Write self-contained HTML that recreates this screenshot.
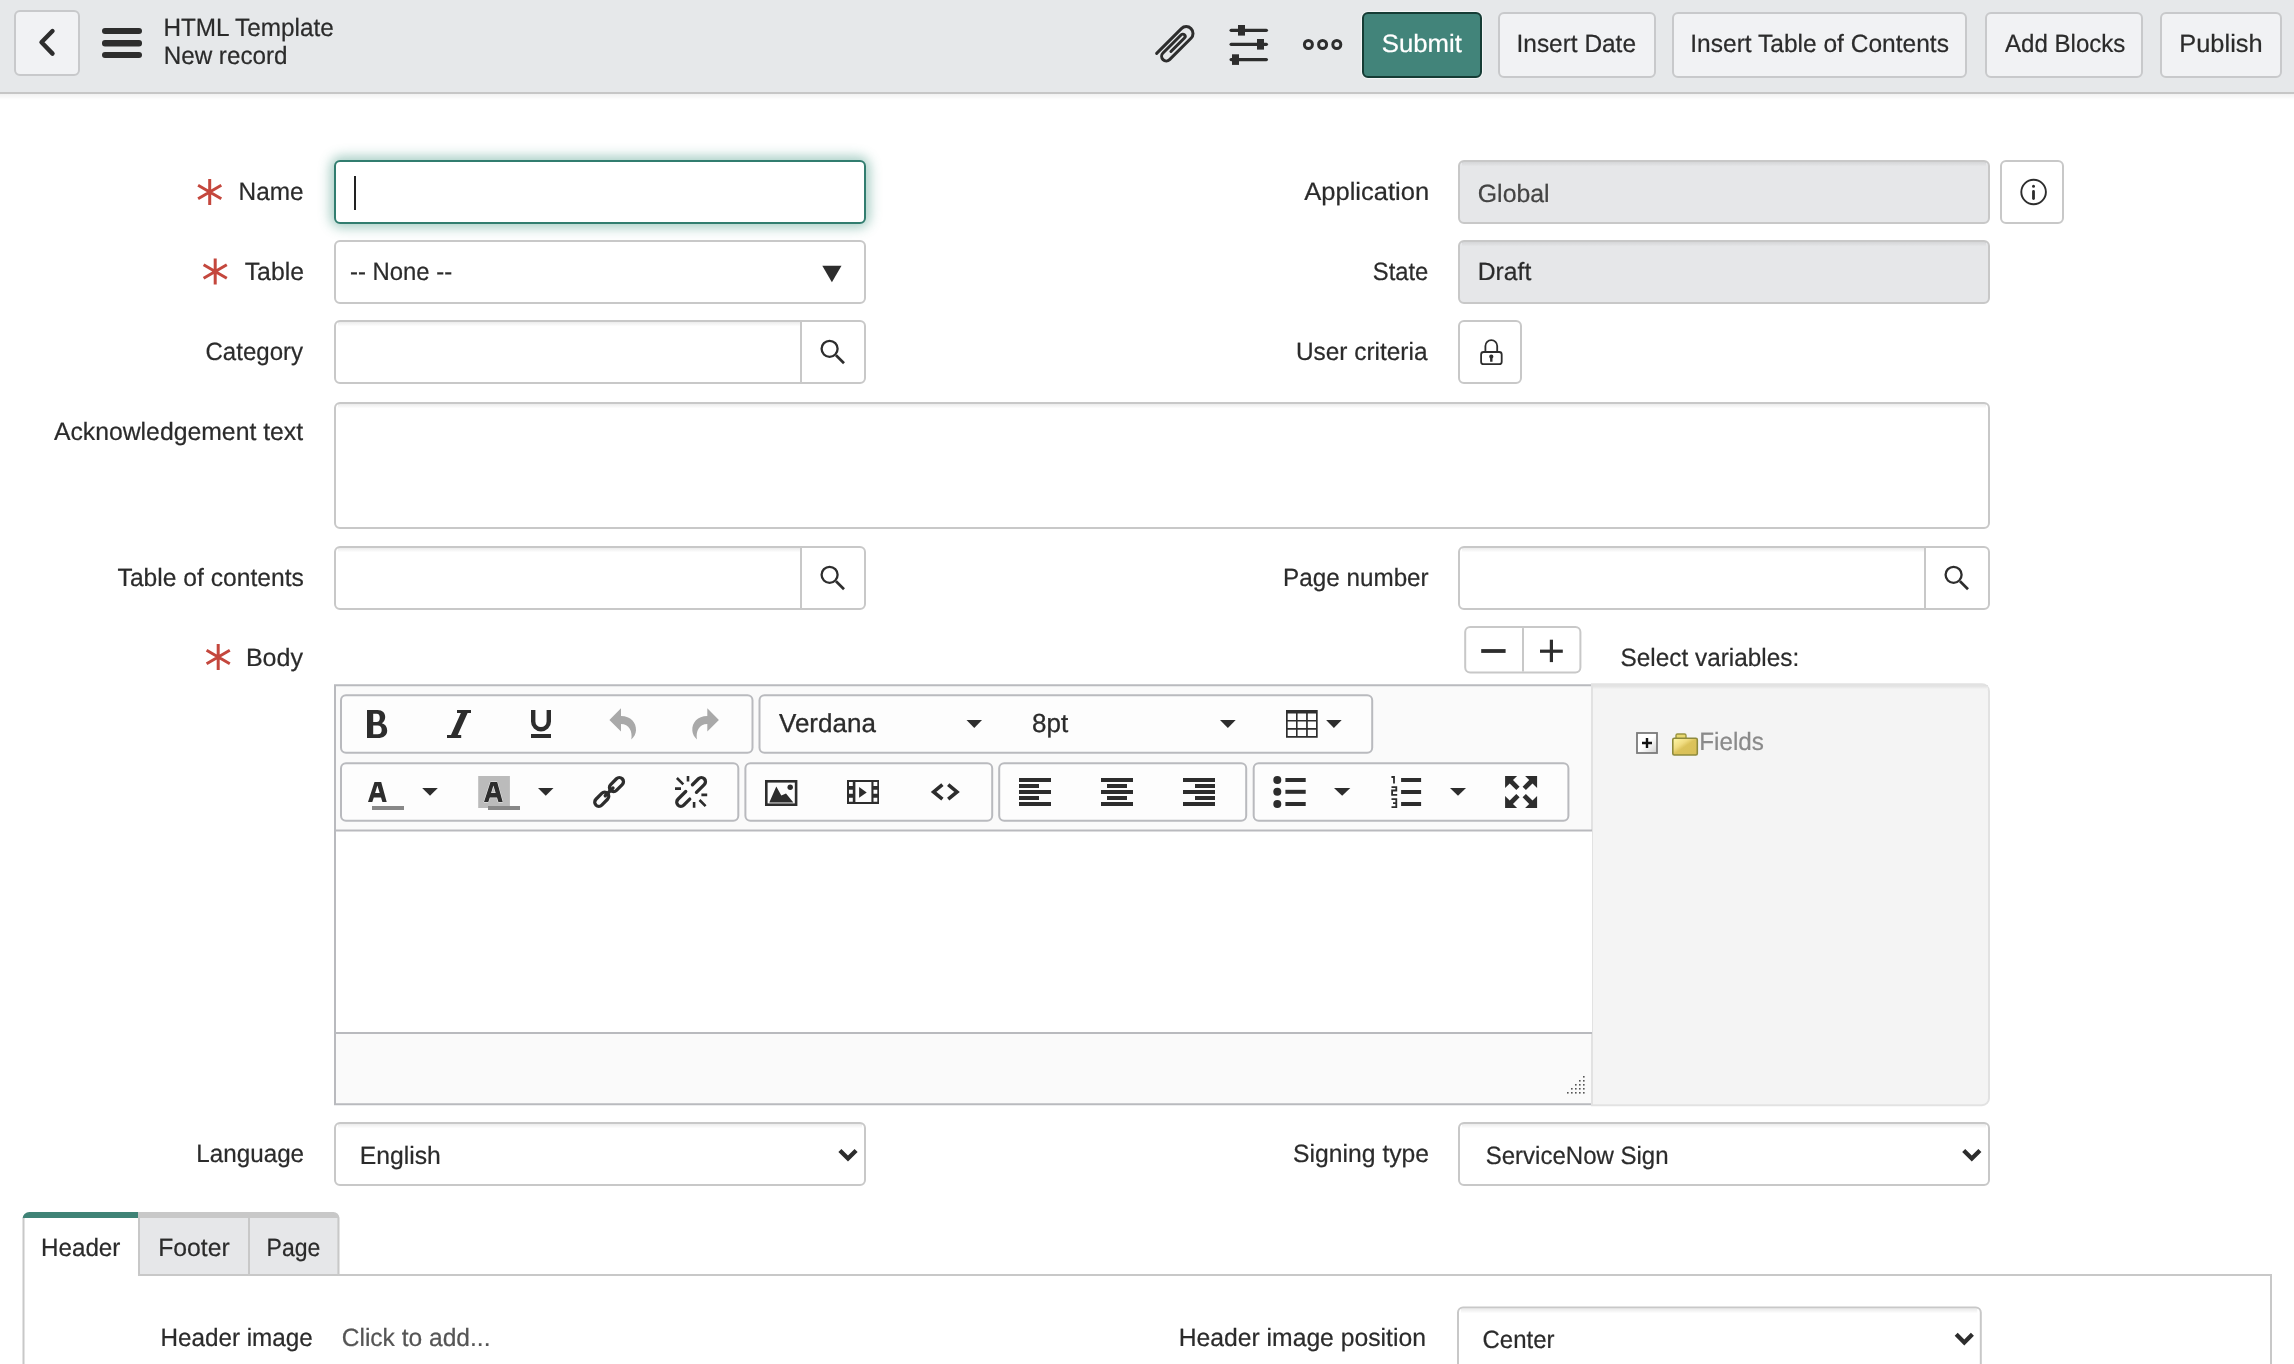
<!DOCTYPE html>
<html><head><meta charset="utf-8">
<style>
html,body{margin:0;padding:0;background:#fff;width:2294px;height:1364px;overflow:hidden}
body{position:relative;font-family:"Liberation Sans",sans-serif}
svg{position:absolute;left:0;top:0;will-change:transform}

.glow{position:absolute;left:334px;top:160px;width:532px;height:64px;box-sizing:border-box;border-radius:8px;box-shadow:0 0 12px 4px rgba(50,140,120,0.42)}
.hshadow{position:absolute;left:0;top:94px;width:2294px;height:6px;background:linear-gradient(rgba(0,0,0,0.055),rgba(0,0,0,0))}
</style></head>
<body>
<div class="hshadow"></div>
<div class="glow"></div>
<svg width="2294" height="1364" viewBox="0 0 2294 1364" font-family="Liberation Sans, sans-serif" font-size="25" style="text-rendering:geometricPrecision">
<!-- HEADER -->
<rect x="0" y="0" width="2294" height="92" fill="#e6e8ea"/>
<rect x="0" y="92" width="2294" height="2" fill="#c6c6c6"/>
<rect x="15" y="11" width="64" height="64" rx="5" fill="#f1f2f4" stroke="#c8c9cb" stroke-width="2"/>
<polyline points="52.5,31 41.5,42.3 52.5,53.6" fill="none" stroke="#2d2d2d" stroke-width="4.4" stroke-linecap="round" stroke-linejoin="round"/>
<rect x="102" y="28" width="40" height="6" rx="3" fill="#2d2d2d"/>
<rect x="102" y="40" width="40" height="6.4" rx="3" fill="#2d2d2d"/>
<rect x="102" y="52" width="40" height="6" rx="3" fill="#2d2d2d"/>
<text stroke="#2b2b2b" stroke-width="0.22" x="163.4" y="36" fill="#2b2b2b" textLength="170.3" lengthAdjust="spacingAndGlyphs">HTML Template</text>
<text stroke="#2b2b2b" stroke-width="0.22" x="163.7" y="64" fill="#2b2b2b" textLength="123.8" lengthAdjust="spacingAndGlyphs">New record</text>
<!-- paperclip -->
<g transform="translate(1186.2,33.4) rotate(-45)" fill="none" stroke="#2d2d2d" stroke-width="3" stroke-linecap="round">
<path d="M-35,-6.8 L0,-6.8 A6.8,6.8 0 0 1 0,6.8 L-30.3,6.8 A4.65,4.65 0 0 1 -30.3,-2.5 L-4.5,-2.5 A2.25,2.25 0 0 1 -4.5,2 L-23.6,2"/>
</g>
<!-- sliders -->
<g fill="#2d2d2d">
<rect x="1229.5" y="28.7" width="38.5" height="3.2" rx="1.6"/>
<rect x="1229.5" y="42.7" width="38.5" height="3.2" rx="1.6"/>
<rect x="1229.5" y="58" width="38.5" height="3.2" rx="1.6"/>
<rect x="1238" y="25" width="7" height="10.6"/>
<rect x="1257" y="39" width="7" height="10.6"/>
<rect x="1232" y="54.3" width="7" height="10.6"/>
</g>
<!-- dots -->
<g fill="none" stroke="#2d2d2d" stroke-width="3">
<circle cx="1308.4" cy="44.5" r="4"/>
<circle cx="1322.6" cy="44.5" r="4"/>
<circle cx="1336.8" cy="44.5" r="4"/>
</g>
<!-- buttons -->
<rect x="1361.5" y="11.5" width="121" height="67" rx="6.5" fill="none" stroke="#f4f5f6" stroke-width="1"/>
<rect x="1363" y="13" width="118" height="64" rx="5" fill="#42847a" stroke="#163c35" stroke-width="2"/>
<text stroke="#fff" stroke-width="0.22" x="1381.8" y="52" fill="#fff" textLength="80.1" lengthAdjust="spacingAndGlyphs">Submit</text>
<rect x="1499" y="13" width="156" height="64" rx="5" fill="#f1f2f4" stroke="#c8c9cb" stroke-width="2"/>
<text stroke="#2b2b2b" stroke-width="0.22" x="1516.5" y="52" fill="#2b2b2b" textLength="119.5" lengthAdjust="spacingAndGlyphs">Insert Date</text>
<rect x="1673" y="13" width="293" height="64" rx="5" fill="#f1f2f4" stroke="#c8c9cb" stroke-width="2"/>
<text stroke="#2b2b2b" stroke-width="0.22" x="1690.3" y="52" fill="#2b2b2b" textLength="258.6" lengthAdjust="spacingAndGlyphs">Insert Table of Contents</text>
<rect x="1986" y="13" width="156" height="64" rx="5" fill="#f1f2f4" stroke="#c8c9cb" stroke-width="2"/>
<text stroke="#2b2b2b" stroke-width="0.22" x="2005.0" y="52" fill="#2b2b2b" textLength="120.4" lengthAdjust="spacingAndGlyphs">Add Blocks</text>
<rect x="2161" y="13" width="120" height="64" rx="5" fill="#f1f2f4" stroke="#c8c9cb" stroke-width="2"/>
<text stroke="#2b2b2b" stroke-width="0.22" x="2179.3" y="52" fill="#2b2b2b" textLength="83.3" lengthAdjust="spacingAndGlyphs">Publish</text>

<!-- FORM -->
<g fill="#2b2b2b">
<!-- asterisks -->
<g stroke="#c4473d" stroke-width="3" fill="none">
<path d="M209.7,179 V205 M198.1,185.3 L221.3,198.7 M198.1,198.7 L221.3,185.3"/>
<path d="M215.2,258.5 V284.5 M203.6,264.8 L226.8,278.2 M203.6,278.2 L226.8,264.8"/>
<path d="M218.2,644 V670 M206.6,650.3 L229.8,663.7 M206.6,663.7 L229.8,650.3"/>
</g>
<text stroke="#2b2b2b" stroke-width="0.22" x="238.6" y="200" textLength="65.0" lengthAdjust="spacingAndGlyphs">Name</text>
<text stroke="#2b2b2b" stroke-width="0.22" x="244.7" y="280" textLength="59.3" lengthAdjust="spacingAndGlyphs">Table</text>
<text stroke="#2b2b2b" stroke-width="0.22" x="205.5" y="360" textLength="97.6" lengthAdjust="spacingAndGlyphs">Category</text>
<text stroke="#2b2b2b" stroke-width="0.22" x="53.9" y="440" textLength="249.2" lengthAdjust="spacingAndGlyphs">Acknowledgement text</text>
<text stroke="#2b2b2b" stroke-width="0.22" x="117.6" y="586" textLength="186.3" lengthAdjust="spacingAndGlyphs">Table of contents</text>
<text stroke="#2b2b2b" stroke-width="0.22" x="245.9" y="666" textLength="57.1" lengthAdjust="spacingAndGlyphs">Body</text>
<text stroke="#2b2b2b" stroke-width="0.22" x="196.3" y="1162" textLength="107.8" lengthAdjust="spacingAndGlyphs">Language</text>
<text stroke="#2b2b2b" stroke-width="0.22" x="1304.2" y="200" textLength="125.0" lengthAdjust="spacingAndGlyphs">Application</text>
<text stroke="#2b2b2b" stroke-width="0.22" x="1372.8" y="280" textLength="55.5" lengthAdjust="spacingAndGlyphs">State</text>
<text stroke="#2b2b2b" stroke-width="0.22" x="1295.9" y="360" textLength="131.6" lengthAdjust="spacingAndGlyphs">User criteria</text>
<text stroke="#2b2b2b" stroke-width="0.22" x="1283.1" y="586" textLength="145.6" lengthAdjust="spacingAndGlyphs">Page number</text>
<text stroke="#2b2b2b" stroke-width="0.22" x="1293.1" y="1162" textLength="136.0" lengthAdjust="spacingAndGlyphs">Signing type</text>
<text stroke="#2b2b2b" stroke-width="0.22" x="1620.6" y="666" textLength="178.6" lengthAdjust="spacingAndGlyphs">Select variables:</text>
</g>
<!-- Name input -->
<rect x="335" y="161" width="530" height="62" rx="5" fill="#fff" stroke="#317d6f" stroke-width="2"/>
<rect x="354" y="176" width="2" height="34" fill="#222"/>
<!-- Table select -->
<rect x="335" y="241" width="530" height="62" rx="5" fill="#fff" stroke="#c8c8c8" stroke-width="2"/>
<text stroke="#2b2b2b" stroke-width="0.22" x="350.0" y="280" fill="#2b2b2b" textLength="102.2" lengthAdjust="spacingAndGlyphs">-- None --</text>
<path d="M822.3,265.8 H841.5 L831.9,282.3 Z" fill="#2d2d2d"/>
<!-- Category -->
<rect x="335" y="321" width="530" height="62" rx="5" fill="#fff" stroke="#c8c8c8" stroke-width="2"/>
<rect x="800" y="322" width="2" height="60" fill="#c8c8c8"/>
<g fill="none" stroke="#2d2d2d" stroke-width="2.3"><circle cx="829.6" cy="348.8" r="8"/><path d="M836.0,355.2 L844.0,363.2" stroke-width="2.7"/></g>
<!-- Ack text -->
<rect x="335" y="403" width="1654" height="125" rx="5" fill="#fff" stroke="#c8c8c8" stroke-width="2"/>
<!-- TOC -->
<rect x="335" y="547" width="530" height="62" rx="5" fill="#fff" stroke="#c8c8c8" stroke-width="2"/>
<rect x="800" y="548" width="2" height="60" fill="#c8c8c8"/>
<g fill="none" stroke="#2d2d2d" stroke-width="2.3"><circle cx="829.6" cy="574.8" r="8"/><path d="M836.0,581.2 L844.0,589.2" stroke-width="2.7"/></g>
<!-- Application -->
<rect x="1459" y="161" width="530" height="62" rx="5" fill="#e6e7e9" stroke="#c8c8c8" stroke-width="2"/>
<text stroke="#444" stroke-width="0.22" x="1477.8" y="202" fill="#444" textLength="71.8" lengthAdjust="spacingAndGlyphs">Global</text>
<rect x="2001" y="161" width="62" height="62" rx="5" fill="#fff" stroke="#c8c8c8" stroke-width="2"/>
<g fill="none" stroke="#2d2d2d" stroke-width="1.9"><circle cx="2033.6" cy="192" r="12.3"/></g>
<circle cx="2033.5" cy="186.2" r="1.5" fill="#2d2d2d"/>
<rect x="2032.1" y="190" width="2.8" height="10" rx="1.4" fill="#2d2d2d"/>
<!-- State -->
<rect x="1459" y="241" width="530" height="62" rx="5" fill="#e6e7e9" stroke="#c8c8c8" stroke-width="2"/>
<text stroke="#2b2b2b" stroke-width="0.22" x="1477.8" y="280" fill="#2b2b2b" textLength="53.5" lengthAdjust="spacingAndGlyphs">Draft</text>
<!-- User criteria -->
<rect x="1459" y="321" width="62" height="62" rx="5" fill="#fff" stroke="#c8c8c8" stroke-width="2"/>
<g fill="none" stroke="#2d2d2d" stroke-width="1.8">
<path d="M1485.4,352 V346.1 A5.9,5.9 0 0 1 1497.2,346.1 V352"/>
<rect x="1481.1" y="352" width="20.6" height="12.2" rx="2.5"/>
</g>
<path d="M1491.3,354.5 a2.1,2.1 0 0 1 2.1,2.1 c0,0.8 -0.4,1.4 -0.9,1.8 v3.4 h-2.4 v-3.4 c-0.5,-0.4 -0.9,-1 -0.9,-1.8 a2.1,2.1 0 0 1 2.1,-2.1z" fill="#2d2d2d"/>
<!-- Page number -->
<rect x="1459" y="547" width="530" height="62" rx="5" fill="#fff" stroke="#c8c8c8" stroke-width="2"/>
<rect x="1924" y="548" width="2" height="60" fill="#c8c8c8"/>
<g fill="none" stroke="#2d2d2d" stroke-width="2.3"><circle cx="1953.6" cy="574.8" r="8"/><path d="M1960.0,581.2 L1968.0,589.2" stroke-width="2.7"/></g>
<!-- +/- -->
<rect x="1465.2" y="627.1" width="115.2" height="45.4" rx="5" fill="#fff" stroke="#c8c8c8" stroke-width="2"/>
<rect x="1522" y="628.1" width="2" height="43.4" fill="#c8c8c8"/>
<rect x="1481.2" y="649.1" width="24.4" height="3.8" fill="#2d2d2d"/>
<rect x="1540" y="649.6" width="22.8" height="3.2" fill="#2d2d2d"/>
<rect x="1549.8" y="639.7" width="3.2" height="22.4" fill="#2d2d2d"/>
<!-- EDITOR -->
<rect x="335" y="685.2" width="1257" height="419" fill="#fafafa"/>
<path d="M1592,685.2 H335 V1104.2 H1592" fill="none" stroke="#b9babe" stroke-width="2"/>
<defs><linearGradient id="vtop" x1="0" y1="0" x2="0" y2="1"><stop offset="0" stop-color="#dedede"/><stop offset="1" stop-color="#f4f4f4"/></linearGradient></defs>
<path d="M1592,684.2 H1982 A7,7 0 0 1 1989,691.2 V1098.2 A7,7 0 0 1 1982,1105.2 H1592 Z" fill="#f4f4f4" stroke="#e2e2e2" stroke-width="2"/>
<rect x="1593" y="685.2" width="395" height="4" fill="url(#vtop)"/>
<rect x="336" y="831" width="1256" height="202" fill="#fff"/>
<rect x="336" y="829.5" width="1256" height="2" fill="#b9babe"/>
<rect x="336" y="1032" width="1256" height="2" fill="#b9babe"/>
<!-- toolbar groups -->
<g fill="#fdfdfd" stroke="#b9babe" stroke-width="2">
<rect x="341" y="695.2" width="411.5" height="57.5" rx="5"/>
<rect x="759.5" y="695.2" width="612.7" height="57.5" rx="5"/>
<rect x="341" y="763.2" width="397.3" height="57.5" rx="5"/>
<rect x="745.4" y="763.2" width="246.8" height="57.5" rx="5"/>
<rect x="999.2" y="763.2" width="247" height="57.5" rx="5"/>
<rect x="1253.7" y="763.2" width="314.7" height="57.5" rx="5"/>
</g>
<g fill="#2d2d2d">
<!-- B -->
<path fill-rule="evenodd" d="M367,710 H377.5 C382.6,710 385.2,713 385.2,717 C385.2,720 383.8,722.2 381.8,723.3 C385.2,724.2 387.2,726.9 387.2,730.4 C387.2,735.2 383.7,738 377.5,738 H367 Z M373.2,713.8 V722 H376.6 C378.8,722 379.8,720.2 379.8,717.9 C379.8,715.4 378.8,713.8 376.6,713.8 Z M373.2,725.6 V734.2 H377.6 C380.4,734.2 381.7,732.5 381.7,729.9 C381.7,727.3 380.4,725.6 377.6,725.6 Z"/>
<!-- I -->
<path d="M457,710 H471 V713 H467.6 L457.7,735 H461.2 V738 H447 V735 H451 L460.9,713 H457 Z"/>
<!-- U -->
<path d="M531,710 H535.4 V721.5 A5.6,5.6 0 0 0 546.6,721.5 V710 H551 V721.5 A10,10 0 0 1 531,721.5 Z"/>
<rect x="531" y="734" width="20" height="4"/>
</g>
<!-- undo redo -->
<g fill="#a9a9a9">
<path d="M609.4,719.9 L621,708.3 V716 C630.8,716 636.3,722.5 636,730.5 C635.8,734 634,737 631.3,739.5 C632.8,731.5 629,724 621,724 V731.6 Z"/>
<path d="M718.9,719.9 L707.3,708.3 V716 C697.5,716 692,722.5 692.3,730.5 C692.5,734 694.3,737 697,739.5 C695.5,731.5 699.3,724 707.3,724 V731.6 Z"/>
</g>
<!-- font family / size -->
<text x="779" y="732" font-size="26" fill="#2b2b2b" stroke="#2b2b2b" stroke-width="0.3">Verdana</text>
<text x="1032" y="732" font-size="26" fill="#2b2b2b" stroke="#2b2b2b" stroke-width="0.3">8pt</text>
<g fill="#2d2d2d">
<path d="M966.5,720 H982 L974.25,727.9 Z"/>
<path d="M1220,720 H1235.7 L1227.85,727.9 Z"/>
<path d="M1326.1,720 H1341.7 L1333.9,727.9 Z"/>
<!-- table icon -->
<path fill-rule="evenodd" d="M1286,710.1 H1317.7 V737.8 H1286 Z M1287.7,713.6 V720 H1296 V713.6 Z M1297.6,713.6 V720 H1306.1 V713.6 Z M1307.8,713.6 V720 H1316 V713.6 Z M1287.7,721.6 V728 H1296 V721.6 Z M1297.6,721.6 V728 H1306.1 V721.6 Z M1307.8,721.6 V728 H1316 V721.6 Z M1287.7,729.7 V736.1 H1296 V729.7 Z M1297.6,729.7 V736.1 H1306.1 V729.7 Z M1307.8,729.7 V736.1 H1316 V729.7 Z"/>
</g>
<!-- row 2 -->
<g fill="#2d2d2d">
<!-- forecolor A -->
<path fill-rule="evenodd" d="M368,802 L374.5,782 H381.2 L386.7,802 H382.4 L381,797.6 H373.8 L372.3,802 Z M375.1,793 H379.7 L377.4,785.6 Z"/>
<path d="M422.2,788 H437.8 L430,795.8 Z"/>
<path d="M538,788 H553.5 L545.75,795.8 Z"/>
</g>
<rect x="372" y="806" width="32" height="4" fill="#888"/>
<rect x="478.2" y="776" width="31.7" height="32" fill="#bbb"/>
<path fill-rule="evenodd" d="M484,802 L490.5,782 H497.2 L502.7,802 H498.4 L497,797.6 H489.8 L488.3,802 Z M491.1,793 H495.7 L493.4,785.6 Z" fill="#2d2d2d" stroke="#fff" stroke-width="0.8" paint-order="stroke"/>
<rect x="488" y="806" width="32" height="4" fill="#888"/>
<!-- link -->
<g fill="none" stroke="#2d2d2d" stroke-width="3.3" stroke-linecap="round">
<g transform="translate(609.1,791.9) rotate(-45)">
<rect x="-18.6" y="-4.1" width="16.4" height="8.2" rx="4.1"/>
<rect x="2.2" y="-4.1" width="16.4" height="8.2" rx="4.1"/>
<path d="M-5.5,0 H5.5"/>
</g>
</g>
<!-- unlink -->
<g fill="none" stroke="#2d2d2d" stroke-width="3.3">
<g transform="translate(691.1,791.9) rotate(-45)" stroke-linecap="round">
<path d="M-3.5,-4.1 H-14.5 A4.1,4.1 0 0 0 -14.5,4.1 H-6"/>
<path d="M3.5,4.1 H14.5 A4.1,4.1 0 0 0 14.5,-4.1 H6"/>
</g>
<path d="M688,776 V781.5 M676.9,778 L683.3,784.4 M675,788.6 H681 M701.4,794.9 H707.2 M694.1,802 V807.8 M699.5,800 L705.6,806.2" stroke-width="2.6"/>
</g>
<!-- image -->
<rect x="766.3" y="781.3" width="29.8" height="23.4" fill="none" stroke="#2d2d2d" stroke-width="2.6"/>
<path d="M769.3,802.6 L776.3,786.6 L781.3,795.6 L786,793.4 L793.4,802.6 Z" fill="#2d2d2d"/>
<circle cx="790.2" cy="787.2" r="2.7" fill="#2d2d2d"/>
<!-- media -->
<path fill-rule="evenodd" fill="#2d2d2d" d="M847,780 H879 V804 H847 Z M855.4,782 V801.9 H871.4 V782 Z M849,782.1 V785.9 H852.8 V782.1 Z M849,789.8 V793.8 H852.8 V789.8 Z M849,797.8 V801.7 H852.8 V797.8 Z M873.5,782.1 V785.9 H877.3 V782.1 Z M873.5,789.8 V793.8 H877.3 V789.8 Z M873.5,797.8 V801.7 H877.3 V797.8 Z"/>
<path d="M859.1,787 L866.7,792.4 L859.1,797.8 Z" fill="#2d2d2d"/>
<!-- code -->
<path d="M942.4,784.6 L933.6,791.9 L942.4,799.2 M948.2,784.6 L957,791.9 L948.2,799.2" fill="none" stroke="#2d2d2d" stroke-width="3.6"/>
<!-- align -->
<g fill="#2d2d2d">
<rect x="1019" y="778" width="32" height="4"/><rect x="1019" y="784" width="20" height="4"/><rect x="1019" y="790" width="32" height="4"/><rect x="1019" y="796" width="20" height="4"/><rect x="1019" y="802" width="32" height="4"/>
<rect x="1101" y="778" width="32" height="4"/><rect x="1107" y="784" width="20" height="4"/><rect x="1101" y="790" width="32" height="4"/><rect x="1107" y="796" width="20" height="4"/><rect x="1101" y="802" width="32" height="4"/>
<rect x="1183" y="778" width="32" height="4"/><rect x="1195" y="784" width="20" height="4"/><rect x="1183" y="790" width="32" height="4"/><rect x="1195" y="796" width="20" height="4"/><rect x="1183" y="802" width="32" height="4"/>
<!-- bullet list -->
<circle cx="1277.3" cy="780" r="4"/><circle cx="1277.3" cy="791.8" r="4"/><circle cx="1277.3" cy="804" r="4"/>
<rect x="1285.4" y="778" width="20.3" height="4"/><rect x="1285.4" y="789.8" width="20.3" height="4"/><rect x="1285.4" y="802" width="20.3" height="4"/>
<path d="M1334,788 H1350.3 L1342.15,795.8 Z"/>
<!-- numbered list -->
<rect x="1401.1" y="778" width="20" height="4"/><rect x="1401.1" y="790" width="20" height="4"/><rect x="1401.1" y="802" width="20" height="4"/>
<path d="M1450,788 H1466 L1458,795.8 Z"/>
</g>
<g fill="none" stroke="#2d2d2d" stroke-width="1.8">
<path d="M1391.4,777 H1394 V783.5"/>
<path d="M1391.5,787.2 H1396.3 V790.5 H1392.1 V794.9 H1397.2"/>
<path d="M1391.5,799.2 H1396.3 V807.1 H1391.5 M1393,803.1 H1396.3"/>
</g>
<!-- fullscreen -->
<g fill="#2d2d2d">
<path d="M1505.1,776 H1517.1 L1513,780.1 L1519.6,786.7 L1516.3,790 L1509.7,783.4 L1505.1,788 Z"/>
<path d="M1537.1,776 H1525.1 L1529.2,780.1 L1522.6,786.7 L1525.9,790 L1532.5,783.4 L1537.1,788 Z"/>
<path d="M1505.1,808 H1517.1 L1513,803.9 L1519.6,797.3 L1516.3,794 L1509.7,800.6 L1505.1,796 Z"/>
<path d="M1537.1,808 H1525.1 L1529.2,803.9 L1522.6,797.3 L1525.9,794 L1532.5,800.6 L1537.1,796 Z"/>
</g>
<!-- resize handle dots -->
<g fill="#555">
<rect x="1583" y="1076" width="1.6" height="1.6"/>
<rect x="1583" y="1080" width="1.6" height="1.6"/><rect x="1579" y="1080" width="1.6" height="1.6"/>
<rect x="1583" y="1084" width="1.6" height="1.6"/><rect x="1579" y="1084" width="1.6" height="1.6"/><rect x="1575" y="1084" width="1.6" height="1.6"/>
<rect x="1583" y="1088" width="1.6" height="1.6"/><rect x="1579" y="1088" width="1.6" height="1.6"/><rect x="1575" y="1088" width="1.6" height="1.6"/><rect x="1571" y="1088" width="1.6" height="1.6"/>
<rect x="1583" y="1092" width="1.6" height="1.6"/><rect x="1579" y="1092" width="1.6" height="1.6"/><rect x="1575" y="1092" width="1.6" height="1.6"/><rect x="1571" y="1092" width="1.6" height="1.6"/><rect x="1567" y="1092" width="1.6" height="1.6"/>
</g>
<!-- variables tree -->
<defs>
<linearGradient id="pb" x1="0" y1="0" x2="1" y2="1"><stop offset="0.5" stop-color="#fff"/><stop offset="1" stop-color="#cfcfcf"/></linearGradient>
<linearGradient id="fd" x1="0" y1="0" x2="1" y2="1"><stop offset="0" stop-color="#fff9a8"/><stop offset="0.35" stop-color="#f0dc80"/><stop offset="0.5" stop-color="#dcc35a"/><stop offset="1" stop-color="#d8bf58"/></linearGradient>
</defs>
<rect x="1637" y="733" width="20" height="20" fill="url(#pb)" stroke="#7a7a7a" stroke-width="1.8"/>
<path d="M1642,743 H1652 M1647,738 V748" stroke="#111" stroke-width="2.4"/>
<path d="M1676,738 V735.5 Q1676,734 1677.5,734 H1684.5 Q1686,734 1686,735.5 V738" fill="#e8d870" stroke="#9a9440" stroke-width="1.4"/>
<rect x="1672.8" y="738.2" width="24.5" height="16.8" rx="1.5" fill="url(#fd)" stroke="#8e8a3c" stroke-width="1.6"/>
<text stroke="#8a8a8a" stroke-width="0.22" x="1699.2" y="750" fill="#8a8a8a" textLength="64.7" lengthAdjust="spacingAndGlyphs">Fields</text>
<!-- Language / Signing selects -->
<rect x="335" y="1123" width="530" height="62" rx="5" fill="#fff" stroke="#c8c8c8" stroke-width="2"/>
<text stroke="#2b2b2b" stroke-width="0.22" x="359.8" y="1164" fill="#2b2b2b" textLength="81.0" lengthAdjust="spacingAndGlyphs">English</text>
<path d="M839.9,1150.4 L848,1158.5 L856.1,1150.4" fill="none" stroke="#2d2d2d" stroke-width="4.3"/>
<rect x="1459" y="1123" width="530" height="62" rx="5" fill="#fff" stroke="#c8c8c8" stroke-width="2"/>
<text stroke="#2b2b2b" stroke-width="0.22" x="1485.7" y="1164" fill="#2b2b2b" textLength="182.9" lengthAdjust="spacingAndGlyphs">ServiceNow Sign</text>
<path d="M1963.7,1150.4 L1971.8,1158.5 L1979.9,1150.4" fill="none" stroke="#2d2d2d" stroke-width="4.3"/>
<!-- TABS -->
<path d="M23.5,1364 V1220 A6,6 0 0 1 29.5,1213.5" fill="none" stroke="#c8c8c8" stroke-width="2"/>
<rect x="138" y="1217" width="201.4" height="58" fill="#e6e7e9"/>
<path d="M22.5,1219 A7,7 0 0 1 29.5,1212 H138 V1218 H22.5 Z" fill="#3f8376"/>
<path d="M138,1212 H333.4 A6,6 0 0 1 339.4,1218 V1275 H337.4 V1218 H138 Z" fill="#c8c8c8"/>
<rect x="138" y="1217" width="2" height="58" fill="#c8c8c8"/>
<rect x="248" y="1217" width="2" height="58" fill="#c8c8c8"/>
<path d="M138,1275 H2271 V1364" fill="none" stroke="#c8c8c8" stroke-width="2"/>
<text stroke="#2b2b2b" stroke-width="0.22" x="41.0" y="1256" fill="#2b2b2b" textLength="79.4" lengthAdjust="spacingAndGlyphs">Header</text>
<text stroke="#2b2b2b" stroke-width="0.22" x="158.2" y="1256" fill="#2b2b2b" textLength="71.5" lengthAdjust="spacingAndGlyphs">Footer</text>
<text stroke="#2b2b2b" stroke-width="0.22" x="266.6" y="1256" fill="#2b2b2b" textLength="53.7" lengthAdjust="spacingAndGlyphs">Page</text>
<text stroke="#2b2b2b" stroke-width="0.22" x="160.4" y="1346" fill="#2b2b2b" textLength="152.4" lengthAdjust="spacingAndGlyphs">Header image</text>
<text stroke="#555" stroke-width="0.22" x="341.7" y="1346" fill="#555" textLength="148.8" lengthAdjust="spacingAndGlyphs">Click to add...</text>
<text stroke="#2b2b2b" stroke-width="0.22" x="1178.7" y="1346" fill="#2b2b2b" textLength="247.2" lengthAdjust="spacingAndGlyphs">Header image position</text>
<rect x="1458" y="1307.4" width="522.8" height="70" rx="5" fill="#fff" stroke="#c8c8c8" stroke-width="2"/>
<text stroke="#2b2b2b" stroke-width="0.22" x="1482.5" y="1348" fill="#2b2b2b" textLength="72.0" lengthAdjust="spacingAndGlyphs">Center</text>
<path d="M1956.2,1334.3 L1964.3,1342.4 L1972.4,1334.3" fill="none" stroke="#2d2d2d" stroke-width="4.3"/>

<!-- insets -->
<defs><linearGradient id="insw" x1="0" y1="0" x2="0" y2="1"><stop offset="0" stop-color="#000" stop-opacity="0.075"/><stop offset="1" stop-color="#000" stop-opacity="0"/></linearGradient></defs>
<g fill="url(#insw)">
<rect x="338" y="322" width="462" height="4.5"/>
<rect x="338" y="404" width="1648" height="4.5"/>
<rect x="338" y="548" width="462" height="4.5"/>
<rect x="1462" y="162" width="524" height="4.5"/>
<rect x="1462" y="242" width="524" height="4.5"/>
<rect x="1462" y="548" width="462" height="4.5"/>
<rect x="338" y="1124" width="524" height="4.5"/>
<rect x="1462" y="1124" width="524" height="4.5"/>
<rect x="1461" y="1309" width="516.3" height="4.5"/>
</g>
<!-- FORM_PLACEHOLDER -->
</svg>
</body></html>
